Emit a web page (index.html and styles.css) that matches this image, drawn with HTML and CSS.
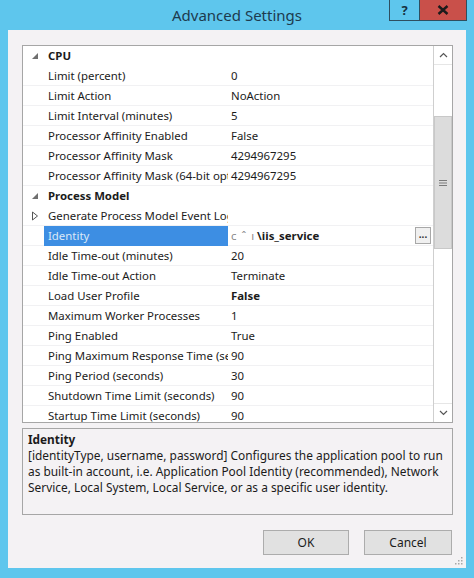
FILE: index.html
```html
<!DOCTYPE html>
<html>
<head>
<meta charset="utf-8">
<link rel="stylesheet" href="styles.css">
</head>
<body>
<div class="window">
  <div class="titlebar">
    <div class="spacer"></div>
    <div class="title">Advanced Settings</div>
    <div class="caption-btns">
      <div class="cbtn help">?</div>
      <div class="cbtn close">
        <svg width="12" height="10" viewBox="0 0 12 10"><path d="M1.5 1 L10.5 9 M10.5 1 L1.5 9" stroke="#1b1b1b" stroke-width="2.4"/></svg>
      </div>
    </div>
  </div>
  <div class="client">
    <div class="grid">
      <div class="rows">
        <div class="row cat"><span class="exp"><svg width="8" height="8" viewBox="0 0 8 8"><path d="M7 1 L7 7 L1 7 Z" fill="#6f6f6f"/></svg></span><span class="name">CPU</span><span class="val"></span></div>
        <div class="row"><span class="exp"></span><span class="name">Limit (percent)</span><span class="val">0</span></div>
        <div class="row"><span class="exp"></span><span class="name">Limit Action</span><span class="val">NoAction</span></div>
        <div class="row"><span class="exp"></span><span class="name">Limit Interval (minutes)</span><span class="val">5</span></div>
        <div class="row"><span class="exp"></span><span class="name">Processor Affinity Enabled</span><span class="val">False</span></div>
        <div class="row"><span class="exp"></span><span class="name">Processor Affinity Mask</span><span class="val">4294967295</span></div>
        <div class="row"><span class="exp"></span><span class="name">Processor Affinity Mask (64-bit option)</span><span class="val">4294967295</span></div>
        <div class="row cat"><span class="exp"><svg width="8" height="8" viewBox="0 0 8 8"><path d="M7 1 L7 7 L1 7 Z" fill="#6f6f6f"/></svg></span><span class="name">Process Model</span><span class="val"></span></div>
        <div class="row"><span class="exp"><svg width="8" height="10" viewBox="0 0 8 10"><path d="M1.5 1 L6.5 5 L1.5 9 Z" fill="none" stroke="#555" stroke-width="1"/></svg></span><span class="name">Generate Process Model Event Log Entry</span><span class="val"></span></div>
        <div class="row sel"><span class="exp"></span><span class="name">Identity</span><span class="val bold"><span class="redact">c ˆ ı</span>\iis_service<span class="dots">...</span></span></div>
        <div class="row"><span class="exp"></span><span class="name">Idle Time-out (minutes)</span><span class="val">20</span></div>
        <div class="row"><span class="exp"></span><span class="name">Idle Time-out Action</span><span class="val">Terminate</span></div>
        <div class="row"><span class="exp"></span><span class="name">Load User Profile</span><span class="val bold">False</span></div>
        <div class="row"><span class="exp"></span><span class="name">Maximum Worker Processes</span><span class="val">1</span></div>
        <div class="row"><span class="exp"></span><span class="name">Ping Enabled</span><span class="val">True</span></div>
        <div class="row"><span class="exp"></span><span class="name">Ping Maximum Response Time (seconds)</span><span class="val">90</span></div>
        <div class="row"><span class="exp"></span><span class="name">Ping Period (seconds)</span><span class="val">30</span></div>
        <div class="row"><span class="exp"></span><span class="name">Shutdown Time Limit (seconds)</span><span class="val">90</span></div>
        <div class="row"><span class="exp"></span><span class="name">Startup Time Limit (seconds)</span><span class="val">90</span></div>
      </div>
      <div class="scrollbar">
        <div class="arrow"><svg width="9" height="6" viewBox="0 0 9 6"><path d="M1 5 L4.5 1.5 L8 5" fill="none" stroke="#555" stroke-width="1.2"/></svg></div>
        <div class="track-top"></div>
        <div class="thumb"><svg width="8" height="8" viewBox="0 0 8 8"><path d="M0 1.5 H8 M0 4 H8 M0 6.5 H8" stroke="#7a7a7a" stroke-width="1"/></svg></div>
        <div class="track-bot"></div>
        <div class="arrow"><svg width="9" height="6" viewBox="0 0 9 6"><path d="M1 1 L4.5 4.5 L8 1" fill="none" stroke="#555" stroke-width="1.2"/></svg></div>
      </div>
    </div>
    <div class="desc">
      <div class="desc-title">Identity</div>
      <div class="desc-text">[identityType, username, password] Configures the application pool to run as built-in account, i.e. Application Pool Identity (recommended), Network Service, Local System, Local Service, or as a specific user identity.</div>
    </div>
    <div class="buttons">
      <div class="btn">OK</div>
      <div class="btn">Cancel</div>
    </div>
    <div class="grip">
      <svg width="8" height="8" viewBox="0 0 8 8"><g fill="#a8a8a8"><rect x="6" y="0" width="1.5" height="1.5"/><rect x="3" y="3" width="1.5" height="1.5"/><rect x="6" y="3" width="1.5" height="1.5"/><rect x="0" y="6" width="1.5" height="1.5"/><rect x="3" y="6" width="1.5" height="1.5"/><rect x="6" y="6" width="1.5" height="1.5"/></g></svg>
    </div>
  </div>
</div>
</body>
</html>
```

FILE: styles.css
```css
* { box-sizing: border-box; }
html, body { margin: 0; padding: 0; }
body {
  background: #5ec6ed;
  font-family: "Noto Sans", "Open Sans", sans-serif;
  font-size: 11.4px;
  color: #1b1b1b;
}
.window {
  width: 474px;
  height: 578px;
  background: #5ec6ed;
  display: flex;
  flex-direction: column;
  overflow: hidden;
}
.titlebar {
  height: 30px;
  display: grid;
  grid-template-columns: 1fr auto 1fr;
  flex: none;
}
.title {
  font-size: 15px;
  color: #1d3b4e;
  line-height: 30px;
}
.caption-btns {
  display: flex;
  justify-content: flex-end;
  align-items: flex-start;
  padding-right: 7px;
}
.cbtn {
  height: 21px;
  display: flex;
  align-items: center;
  justify-content: center;
  border: 1px solid #2e4f60;
  border-top: none;
}
.help {
  width: 30px;
  background: #5ec6ed;
  font-weight: bold;
  font-size: 13px;
  color: #16303e;
  border-right: none;
}
.close {
  width: 48px;
  background: #c9504a;
}
.client {
  margin: 0 8px;
  height: 538px;
  background: #f4f2f4;
  padding: 15px 13px 0 14px;
  display: flex;
  flex-direction: column;
}
.grid {
  height: 378px;
  border: 1px solid #a6a6a6;
  background: #fff;
  display: flex;
  overflow: hidden;
  flex: none;
}
.rows {
  flex: 1;
  overflow: hidden;
}
.row {
  height: 20px;
  display: flex;
  align-items: center;
  border-bottom: 1px solid #f1f1f3;
  line-height: 19px;
  white-space: nowrap;
}
.exp {
  width: 21px;
  flex: none;
  display: flex;
  align-items: center;
  justify-content: center;
  padding-left: 2px;
  height: 19px;
}
.name {
  width: 184px;
  flex: none;
  padding-left: 4px;
  overflow: hidden;
  height: 19px;
}
.val {
  flex: 1;
  padding-left: 3px;
  height: 19px;
  display: flex;
  align-items: center;
}
.cat .name { font-weight: bold; }
.cat { border-bottom-color: #fff; }
.bold { font-weight: bold; }
.sel .name {
  background: #3d8ee3;
  color: #dbe8f7;
  height: 20px;
  margin-top: 1px;
}
.redact {
  color: #8a8a8a;
  font-weight: normal;
  margin-right: 2px;
  letter-spacing: 1px;
}
.dots {
  margin-left: auto;
  margin-right: 2px;
  width: 16px;
  height: 17px;
  border: 1px solid #a8a8a8;
  background: #f0f0f0;
  font-size: 10px;
  font-weight: bold;
  line-height: 12px;
  text-align: center;
  color: #333;
}
.scrollbar {
  width: 19px;
  flex: none;
  border-left: 1px solid #cfcfcf;
  display: flex;
  flex-direction: column;
  background: #fff;
}
.arrow {
  height: 18px;
  display: flex;
  align-items: center;
  justify-content: center;
  flex: none;
}
.track-top { height: 52px; flex: none; border-top: 1px solid #e6e6e6; }
.thumb {
  height: 133px;
  flex: none;
  background: #dcdcdc;
  border: 1px solid #c8c8c8;
  display: flex;
  align-items: center;
  justify-content: center;
}
.track-bot { flex: 1; border-bottom: 1px solid #e6e6e6; }
.desc {
  margin-top: 5px;
  height: 87px;
  border: 1px solid #a6a6a6;
  background: #f4f2f4;
  padding: 2px 5px;
  flex: none;
}
.desc-title {
  font-weight: bold;
  line-height: 16px;
  font-size: 11.8px;
}
.desc-text {
  line-height: 16px;
  font-size: 11.9px;
}
.buttons {
  margin-top: 15px;
  display: flex;
  justify-content: flex-end;
  gap: 15px;
  padding-right: 1px;
}
.btn {
  width: 88px;
  height: 25px;
  border: 1px solid #acacac;
  background: #e1e1e1;
  display: flex;
  align-items: center;
  justify-content: center;
  font-size: 12px;
}
.buttons .btn:first-child { width: 86px; }
.grip {
  display: flex;
  justify-content: flex-end;
  margin-top: 2px;
  margin-right: -10px;
}
```
